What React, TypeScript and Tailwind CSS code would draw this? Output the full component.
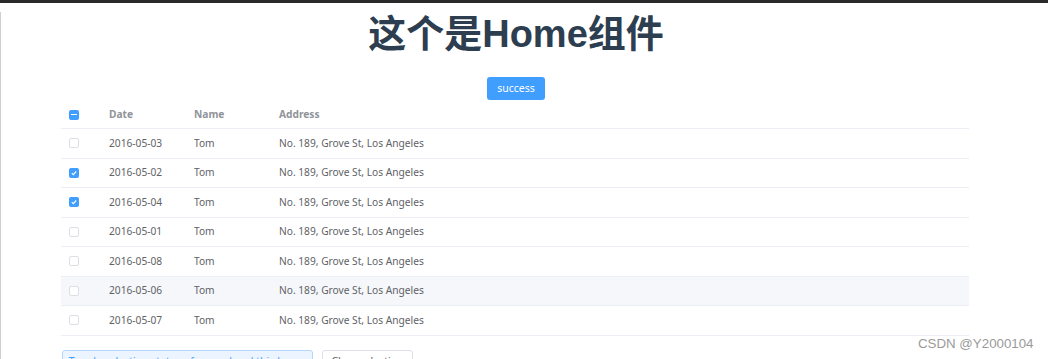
import React from "react";

const rows = [
  { date: "2016-05-03", checked: false },
  { date: "2016-05-02", checked: true },
  { date: "2016-05-04", checked: true },
  { date: "2016-05-01", checked: false },
  { date: "2016-05-08", checked: false },
  { date: "2016-05-06", checked: false, hover: true },
  { date: "2016-05-07", checked: false },
];

function Box({ state }: { state: "none" | "checked" | "indeterminate" }) {
  if (state === "none") {
    return <span className="block w-[10px] h-[10px] rounded-[2px] border border-[#dcdfe6] bg-white" />;
  }
  return (
    <span className="flex items-center justify-center w-[10px] h-[10px] rounded-[2px] bg-[#409eff]">
      {state === "indeterminate" ? (
        <span className="block w-[6px] h-[1.5px] bg-white" />
      ) : (
        <svg width="8" height="8" viewBox="0 0 8 8">
          <path d="M1.8 4.2 L3.3 5.6 L6.2 2.5" stroke="white" strokeWidth="1.1" fill="none" />
        </svg>
      )}
    </span>
  );
}

export default function App() {
  return (
    <div className="w-[1048px] h-[359px] overflow-hidden bg-white relative" style={{ fontFamily: '"Noto Sans", "Noto Sans CJK SC", sans-serif' }}>
      <div className="h-[3px] bg-[#2a2a2a]" />
      <div className="border-l border-[#cfcfcf] h-[356px] w-[1031px]">
        <h1
          className="mt-[9px] text-center text-[38px] leading-[44px] font-bold text-[#2c3e50]"
          style={{ fontFamily: '"Liberation Sans", "Noto Sans CJK SC", sans-serif' }}
        >
          这个是Home组件
        </h1>
        <div className="flex justify-center mt-[21px]">
          <button className="w-[58px] h-[23px] rounded-[3px] bg-[#409eff] text-white text-[10.5px] leading-none">
            success
          </button>
        </div>
        <div className="ml-[60px] mt-[1px] w-[908px] text-[10.2px]">
          <div className="flex items-center h-[28px] border-b border-[#ebeef5] text-[#909399] font-bold">
            <div className="w-[48px] pl-[8px]"><Box state="indeterminate" /></div>
            <div className="w-[85px]">Date</div>
            <div className="w-[85px]">Name</div>
            <div>Address</div>
          </div>
          {rows.map((r) => (
            <div
              key={r.date}
              className={`flex items-center h-[29.5px] border-b border-[#ebeef5] text-[#606266] ${r.hover ? "bg-[#f5f7fa]" : ""}`}
            >
              <div className="w-[48px] pl-[8px]"><Box state={r.checked ? "checked" : "none"} /></div>
              <div className="w-[85px]">{r.date}</div>
              <div className="w-[85px]">Tom</div>
              <div>No. 189, Grove St, Los Angeles</div>
            </div>
          ))}
          <div className="flex gap-[9px] mt-[14px] ml-[1px]">
            <button className="w-[251px] h-[24px] rounded-[3px] bg-[#ecf5ff] border border-[#b3d8ff] text-[#409eff] text-[10.5px]">
              Toggle selection status of second and third rows
            </button>
            <button className="w-[91px] h-[24px] rounded-[3px] bg-white border border-[#dcdfe6] text-[#606266] text-[10.5px]">
              Clear selection
            </button>
          </div>
        </div>
      </div>
      <div
        className="absolute left-[918px] top-[336px] text-[13.3px] leading-[16px] text-[#9a9a9a]"
        style={{ fontFamily: '"Liberation Sans", sans-serif' }}
      >
        CSDN @Y2000104
      </div>
    </div>
  );
}
